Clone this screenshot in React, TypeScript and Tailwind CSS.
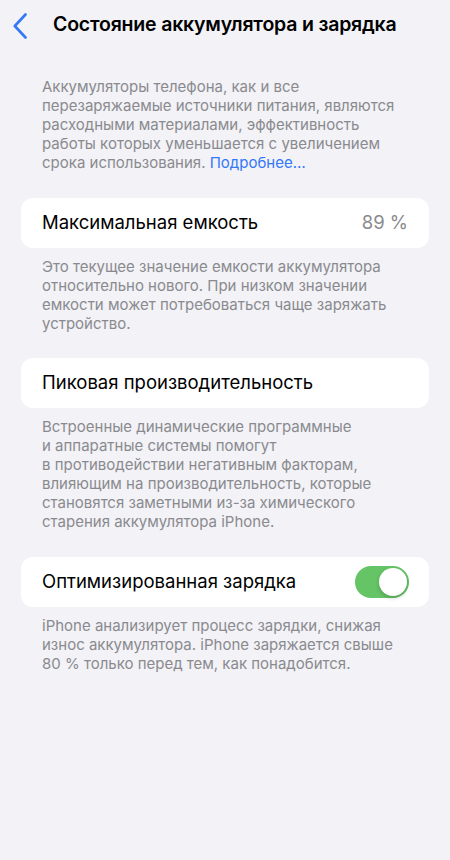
const font = { fontFamily: 'Inter, "Noto Sans", sans-serif' };

const Footer = ({ children }: { children: React.ReactNode }) => (
  <p className="pl-[42px] pr-[40px] pt-[9px] text-[15px] leading-[19px] text-[#8a8a8e]">{children}</p>
);

const Toggle = ({ on }: { on: boolean }) => (
  <div
    className={`w-[54px] h-[32px] rounded-full p-[2px] flex ${on ? 'bg-[#65c466] justify-end' : 'bg-[#e9e9ea] justify-start'}`}
  >
    <div className="w-[28px] h-[28px] rounded-full bg-white shadow-[0_2px_4px_rgba(0,0,0,0.2)]" />
  </div>
);

export default function App() {
  return (
    <div className="w-[450px] min-h-[860px] bg-[#f2f2f7] text-black" style={font}>
      <header className="h-[50px] flex items-center pl-[13px]">
        <svg width="14" height="26" viewBox="0 0 14 26" fill="none" className="mt-[1px]">
          <path d="M12.5 1.5 L1.8 13 L12.5 24.5" stroke="#3478f6" strokeWidth="2.6" strokeLinecap="round" strokeLinejoin="round" />
        </svg>
        <h1 className="ml-[26px] text-[19.5px] font-semibold tracking-[-0.2px]">Состояние аккумулятора и зарядка</h1>
      </header>

      <p className="pl-[42px] pr-[40px] pt-[27px] text-[15px] leading-[19px] text-[#8a8a8e]">
        Аккумуляторы телефона, как и все перезаряжаемые источники питания, являются расходными материалами,
        эффективность работы которых уменьшается с увеличением срока использования.{' '}
        <span className="text-[#3478f6]">Подробнее…</span>
      </p>

      <div className="mx-[21px] mt-[26px] h-[50px] rounded-[12px] bg-white flex items-center justify-between px-[21px]">
        <span className="text-[18.5px]">Максимальная емкость</span>
        <span className="text-[18.5px] text-[#8a8a8e]">89 %</span>
      </div>
      <Footer>
        Это текущее значение емкости аккумулятора относительно нового. При низком значении емкости может
        потребоваться чаще заряжать устройство.
      </Footer>

      <div className="mx-[21px] mt-[25px] h-[50px] rounded-[12px] bg-white flex items-center px-[21px]">
        <span className="text-[18.5px]">Пиковая производительность</span>
      </div>
      <Footer>
        Встроенные динамические программные
        <br />и аппаратные системы помогут
        <br />в противодействии негативным факторам, влияющим на производительность, которые становятся
        заметными из-за химического старения аккумулятора iPhone.
      </Footer>

      <div className="mx-[21px] mt-[26px] h-[50px] rounded-[12px] bg-white flex items-center justify-between pl-[21px] pr-[20px]">
        <span className="text-[18.5px]">Оптимизированная зарядка</span>
        <Toggle on />
      </div>
      <Footer>
        iPhone анализирует процесс зарядки, снижая износ аккумулятора. iPhone заряжается свыше 80 % только перед
        тем, как понадобится.
      </Footer>
    </div>
  );
}
